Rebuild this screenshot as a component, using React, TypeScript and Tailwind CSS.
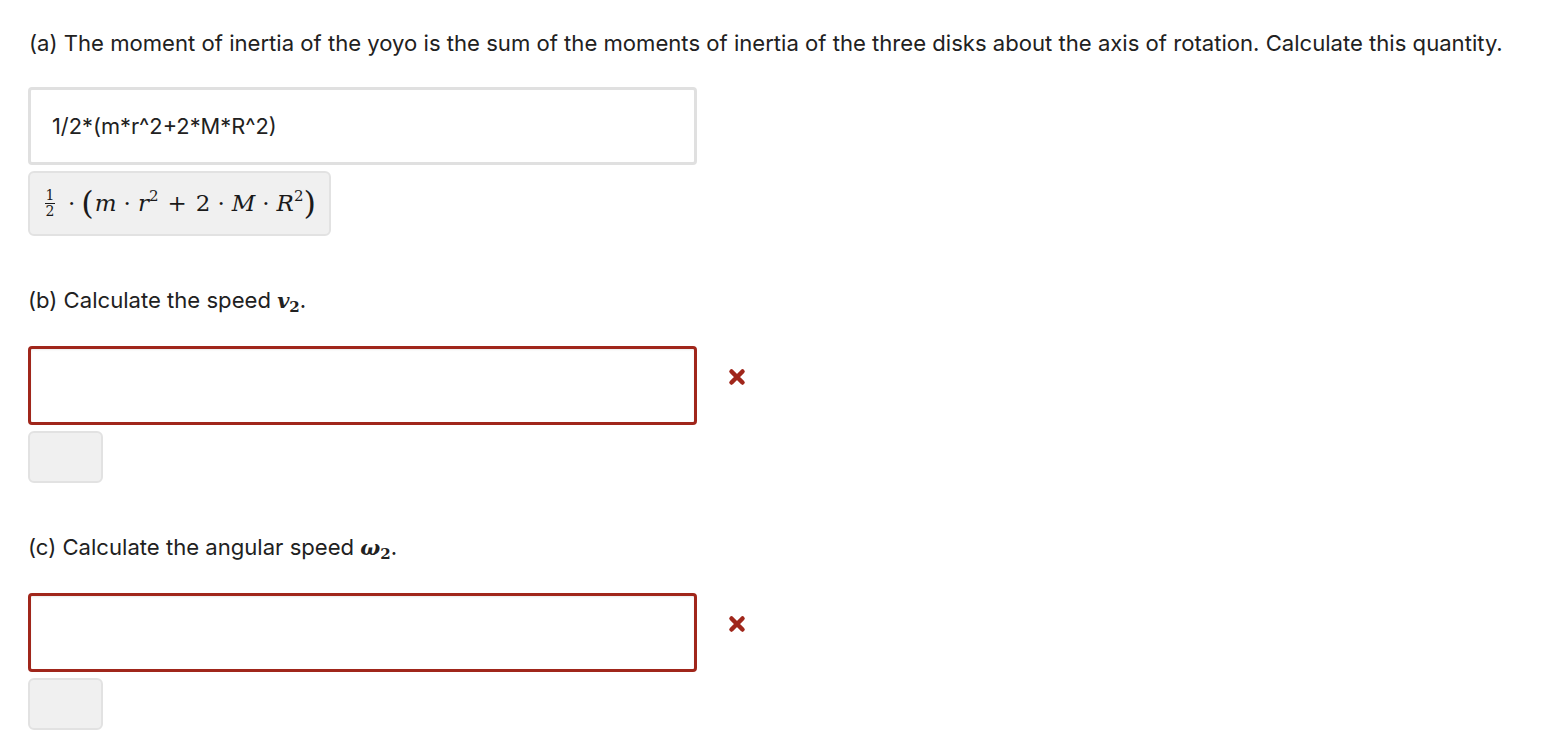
import React from "react";

const math = { fontFamily: '"DejaVu Serif", "Liberation Serif", serif' };

function WrongMark() {
  return (
    <svg width="18" height="18" viewBox="0 0 18 18" className="ml-[31px] mt-[22px] shrink-0">
      <path d="M3.5 3.5 L14.5 14.5 M14.5 3.5 L3.5 14.5" stroke="#a0261b" strokeWidth="4.5" strokeLinecap="round" />
    </svg>
  );
}

function EmptyPart({ label, children, top }: { label: string; children: React.ReactNode; top: string }) {
  return (
    <div className={top}>
      <p className="text-[22.1px] leading-[28px] text-[#212121]">
        {label} {children}.
      </p>
      <div className="mt-[31px] flex items-start">
        <div className="h-[79px] w-[669px] rounded-[4px] border-[3px] border-[#a0261b] bg-white shadow-[inset_0_1px_2px_rgba(0,0,0,0.08)]" />
        <WrongMark />
      </div>
      <div className="mt-[6px] h-[52px] w-[75px] rounded-[6px] border-2 border-[#e2e2e2] bg-[#f0f0f0]" />
    </div>
  );
}

export default function App() {
  return (
    <div
      className="min-h-screen bg-white px-[28px] pt-[29px] text-[#212121]"
      style={{ fontFamily: 'Inter, "Liberation Sans", sans-serif' }}
    >
      <p className="pl-[1px] text-[22.1px] leading-[28px]">
        (a) The moment of inertia of the yoyo is the sum of the moments of inertia of the three disks about the axis of rotation. Calculate this quantity.
      </p>

      <div className="mt-[30px] flex h-[78px] w-[669px] items-center rounded-[4px] border-[3px] border-[#e0e0e0] bg-white px-[21px] text-[21.8px]">
        1/2*(m*r^2+2*M*R^2)
      </div>
      <div
        className="mt-[6px] flex h-[65px] w-[303px] items-center rounded-[6px] border-2 border-[#e2e2e2] bg-[#f0f0f0] pl-[15px] text-[23px] text-[#1a1a1a]"
        style={math}
      >
        <span className="mr-[7px] inline-flex flex-col items-center text-[14px] leading-[15px]">
          <span>1</span>
          <span className="h-px w-[10px] bg-[#1a1a1a]" />
          <span>2</span>
        </span>
        <span className="mx-[6px]">·</span>
        <span className="mb-[2px] text-[32px] font-light">(</span>
        <i className="ml-[1px]">m</i>
        <span className="mx-[7px]">·</span>
        <i>r</i>
        <sup className="text-[15px]">2</sup>
        <span className="mx-[9px]">+</span>
        <span>2</span>
        <span className="mx-[7px]">·</span>
        <i>M</i>
        <span className="mx-[7px]">·</span>
        <i>R</i>
        <sup className="text-[15px]">2</sup>
        <span className="mb-[2px] text-[32px] font-light">)</span>
      </div>

      <EmptyPart label="(b) Calculate the speed" top="mt-[50px]">
        <span style={math} className="text-[21px] italic font-bold">
          v<sub className="text-[15px] not-italic">2</sub>
        </span>
      </EmptyPart>

      <EmptyPart label="(c) Calculate the angular speed" top="mt-[50px]">
        <span style={math} className="text-[21px] italic font-bold">
          ω<sub className="text-[15px] not-italic">2</sub>
        </span>
      </EmptyPart>
    </div>
  );
}
